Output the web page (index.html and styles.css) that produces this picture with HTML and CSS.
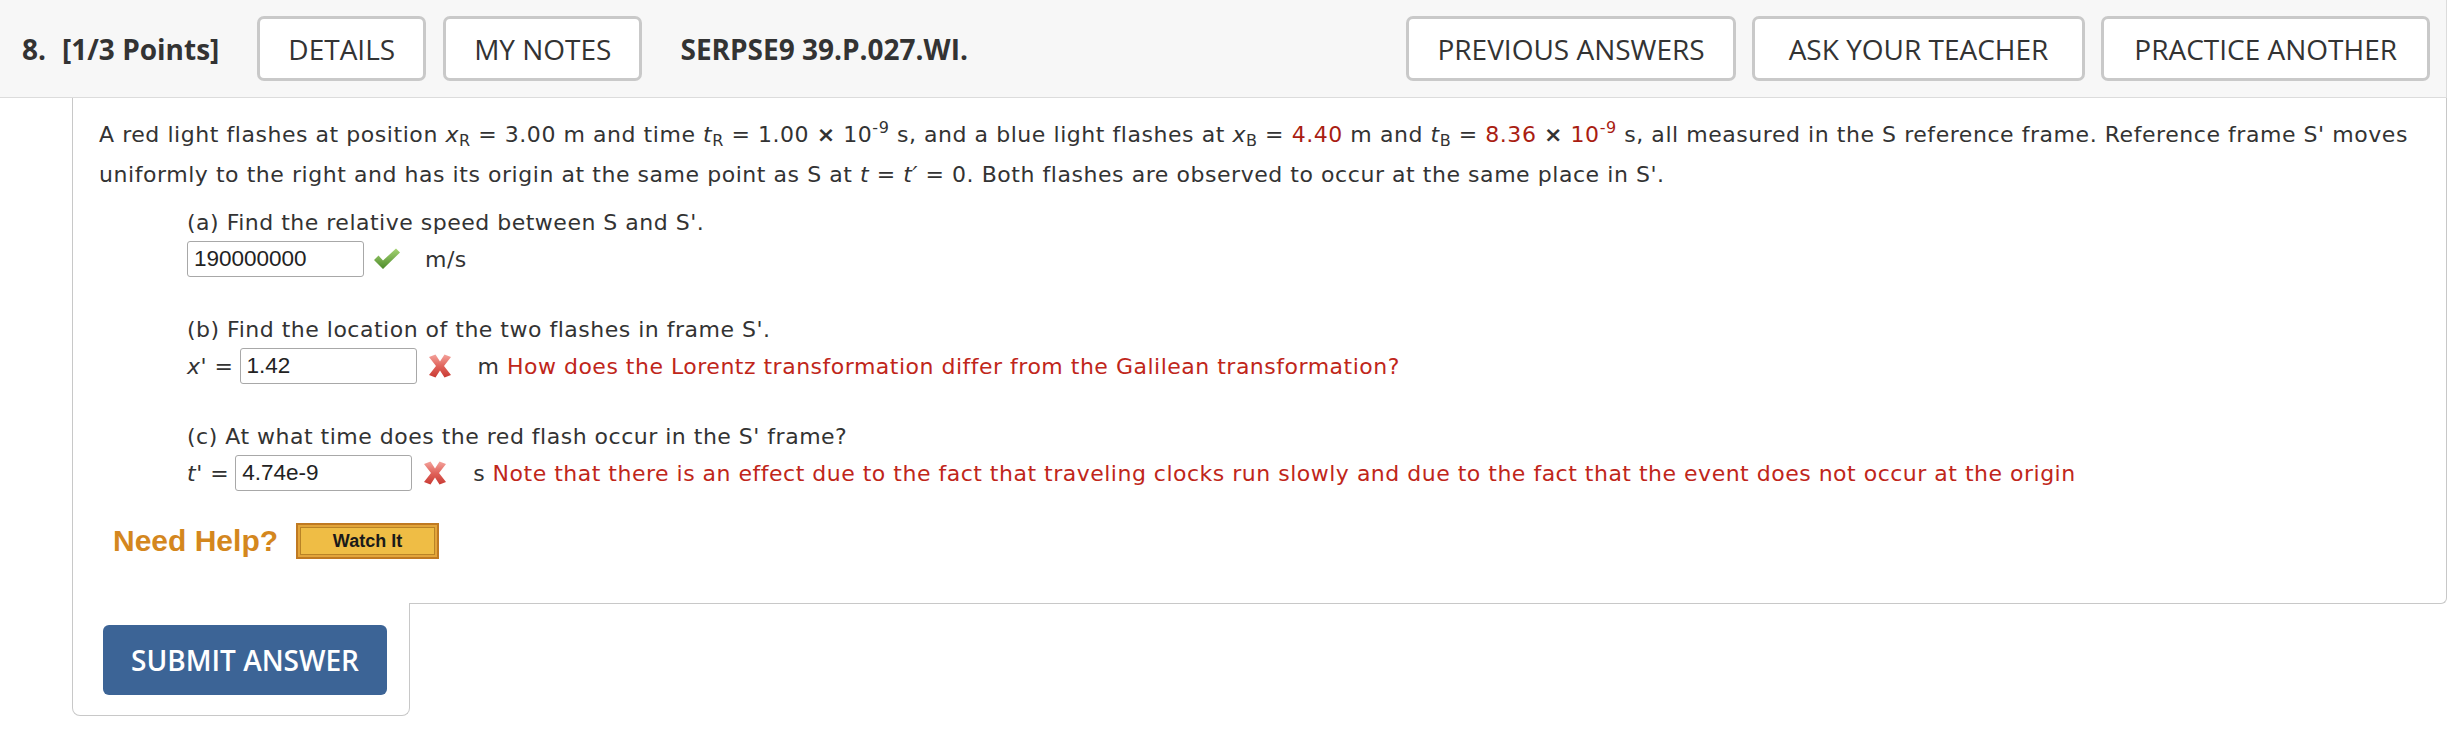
FILE: index.html
```html
<!DOCTYPE html>
<html>
<head>
<meta charset="utf-8">
<link rel="stylesheet" href="styles.css">
</head>
<body>
<div class="question">
  <div class="qhead">
    <span class="qnum">8.</span>
    <span class="qpts">[1/3 Points]</span>
    <button class="hbtn">DETAILS</button>
    <button class="hbtn">MY NOTES</button>
    <span class="qcode">SERPSE9 39.P.027.WI.</span>
    <div class="hright">
      <button class="hbtn prev">PREVIOUS ANSWERS</button>
      <button class="hbtn ask">ASK YOUR TEACHER</button>
      <button class="hbtn practice">PRACTICE ANOTHER</button>
    </div>
  </div>
  <div class="qbody">
    <p class="stem">A red light flashes at position <i>x</i><sub>R</sub> = 3.00 m and time <i>t</i><sub>R</sub> = 1.00 <b>×</b> 10<sup>-9</sup> s, and a blue light flashes at <i>x</i><sub>B</sub> = <span class="num">4.40</span> m and <i>t</i><sub>B</sub> = <span class="num">8.36</span> <b>×</b> <span class="num">10<sup>-9</sup></span> s, all measured in the S reference frame. Reference frame S' moves uniformly to the right and has its origin at the same point as S at <i>t</i> = <i>t′</i> = 0. Both flashes are observed to occur at the same place in S'.</p>

    <div class="part">
      <div class="plabel">(a) Find the relative speed between S and S'.</div>
      <div class="prow">
        <input class="ans" type="text" value="190000000" readonly>
        <svg class="mark" width="28" height="24" viewBox="0 0 28 24"><defs><linearGradient id="gc" x1="0" y1="0" x2="0" y2="1"><stop offset="0" stop-color="#a6d474"/><stop offset="1" stop-color="#4c8a2a"/></linearGradient></defs><path d="M1 13 L5.5 8.5 L10 13.5 L23 1.5 L27 5.5 L10 22 Z" fill="url(#gc)"/></svg>
        <span class="unit">m/s</span>
      </div>
    </div>

    <div class="part">
      <div class="plabel">(b) Find the location of the two flashes in frame S'.</div>
      <div class="prow">
        <span class="var"><i>x</i>' =</span>
        <input class="ans" type="text" value="1.42" readonly>
        <svg class="mark" width="28" height="26" viewBox="0 0 28 26"><defs><linearGradient id="gx1" x1="0" y1="0" x2="0" y2="1"><stop offset="0" stop-color="#f4a39c"/><stop offset="0.5" stop-color="#e0645c"/><stop offset="1" stop-color="#c93a33"/></linearGradient></defs><path d="M3 4 L9.5 1.5 L14 8.5 L18.5 1.5 L25 4 L18 13 L25 22 L18.5 24.5 L14 17.5 L9.5 24.5 L3 22 L10 13 Z" fill="url(#gx1)"/></svg>
        <span class="unit">m <span class="hint">How does the Lorentz transformation differ from the Galilean transformation?</span></span>
      </div>
    </div>

    <div class="part last">
      <div class="plabel">(c) At what time does the red flash occur in the S' frame?</div>
      <div class="prow">
        <span class="var"><i>t</i>' =</span>
        <input class="ans" type="text" value="4.74e-9" readonly>
        <svg class="mark" width="28" height="26" viewBox="0 0 28 26"><defs><linearGradient id="gx2" x1="0" y1="0" x2="0" y2="1"><stop offset="0" stop-color="#f4a39c"/><stop offset="0.5" stop-color="#e0645c"/><stop offset="1" stop-color="#c93a33"/></linearGradient></defs><path d="M3 4 L9.5 1.5 L14 8.5 L18.5 1.5 L25 4 L18 13 L25 22 L18.5 24.5 L14 17.5 L9.5 24.5 L3 22 L10 13 Z" fill="url(#gx2)"/></svg>
        <span class="unit">s <span class="hint">Note that there is an effect due to the fact that traveling clocks run slowly and due to the fact that the event does not occur at the origin</span></span>
      </div>
    </div>

    <div class="help">
      <span class="needhelp">Need Help?</span>
      <button class="watch"><span class="watch-in">Watch It</span></button>
    </div>
  </div>
  <div class="submitwrap">
    <button class="submit">SUBMIT ANSWER</button>
  </div>
</div>
</body>
</html>
```

FILE: styles.css
```css
html, body {
  margin: 0;
  padding: 0;
  background: #ffffff;
}
body {
  font-family: "DejaVu Sans", Verdana, sans-serif;
  color: #333333;
  width: 2449px;
}
.question {
  width: 2447px;
}
.qhead {
  display: flex;
  align-items: center;
  height: 97px;
  background: #f7f7f7;
  border-bottom: 1px solid #dcdcdc;
  border-right: 1px solid #dcdcdc;
  padding: 0 16px 0 22px;
  font-family: "Open Sans", sans-serif;
  font-size: 28px;
  color: #333333;
}
.qnum {
  font-weight: 700;
  margin-right: 16px;
}
.qpts {
  font-weight: 700;
  margin-right: 38px;
}
.hbtn {
  font-family: "Open Sans", sans-serif;
  font-size: 28px;
  font-weight: 400;
  color: #333333;
  height: 65px;
  padding: 0 28px;
  background: #ffffff;
  border: 3px solid #c9c9c9;
  border-radius: 7px;
  margin-right: 17px;
}
.hbtn.prev {
  padding: 0 28px;
}
.hbtn.ask {
  padding: 0 34px;
}
.hbtn.practice {
  padding: 0 30px;
}
.qcode {
  font-weight: 700;
  margin-left: 21px;
}
.hright {
  margin-left: auto;
  display: flex;
}
.hright .hbtn {
  margin-right: 16px;
}
.hright .hbtn:last-child {
  margin-right: 0;
}
.qbody {
  margin-left: 72px;
  border: 1px solid #c8c8c8;
  border-top: 0;
  border-radius: 0 0 6px 0;
  padding: 17px 30px 44px 26px;
  background: #ffffff;
}
.stem {
  margin: 0 0 10px 0;
  font-size: 22px;
  line-height: 40px;
  letter-spacing: 0.55px;
}
sub, sup {
  line-height: 0;
  font-size: 16px;
}
sub {
  vertical-align: -4px;
}
sup {
  vertical-align: 9px;
}
.num {
  color: #a91d12;
}
.part {
  margin-left: 88px;
  margin-bottom: 35px;
  font-size: 22px;
  letter-spacing: 0.5px;
}
.part.last {
  margin-bottom: 32px;
}
.plabel {
  line-height: 36px;
  white-space: nowrap;
}
.prow {
  display: flex;
  align-items: center;
  height: 36px;
  white-space: nowrap;
}
.var {
  margin-right: 6px;
}
.ans {
  width: 177px;
  height: 36px;
  box-sizing: border-box;
  margin: 0;
  border: 1px solid #a8a8a8;
  border-radius: 3px;
  font-family: "Liberation Sans", Arial, sans-serif;
  font-size: 22.5px;
  letter-spacing: 0;
  color: #222222;
  padding: 0 6px;
  background: #ffffff;
}
.mark {
  flex: none;
  margin: 0 24px 0 9px;
}
.hint {
  color: #c0261a;
}
.help {
  display: flex;
  align-items: center;
  height: 36px;
  margin-left: 14px;
}
.needhelp {
  font-family: "Liberation Sans", Arial, sans-serif;
  font-weight: 700;
  font-size: 30px;
  color: #d4871e;
  margin-right: 18px;
}
.watch {
  width: 143px;
  height: 36px;
  padding: 2px;
  margin: 0;
  border: 2px solid #c07a22;
  background: #e3a53a;
  display: flex;
}
.watch-in {
  flex: 1;
  display: flex;
  align-items: center;
  justify-content: center;
  background: #efbd45;
  border: 1px solid #b98326;
  font-family: "Liberation Sans", Arial, sans-serif;
  font-weight: 700;
  font-size: 18px;
  color: #1a1a1a;
}
.submitwrap {
  margin-left: 72px;
  margin-top: -1px;
  width: 338px;
  box-sizing: border-box;
  border: 1px solid #c8c8c8;
  border-top: 0;
  border-radius: 0 0 8px 8px;
  padding: 22px 0 20px 30px;
  background: #ffffff;
}
.submit {
  width: 284px;
  height: 70px;
  margin: 0;
  border: 0;
  border-radius: 6px;
  background: #3c6496;
  color: #ffffff;
  font-family: "Open Sans", sans-serif;
  font-size: 28px;
  font-weight: 600;
}
```
